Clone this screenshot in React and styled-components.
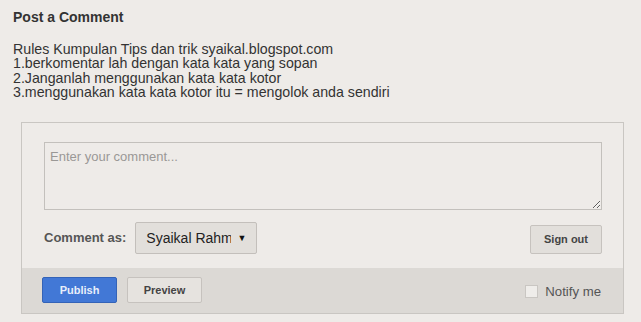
import React from "react";
import styled, { createGlobalStyle } from "styled-components";

const Global = createGlobalStyle`
  html, body { margin: 0; padding: 0; background: #eeebe8; }
  body { font-family: Arial, "Liberation Sans", sans-serif; }
`;

const Page = styled.div`
  width: 641px;
  height: 322px;
  box-sizing: border-box;
  padding: 9px 0 0 13px;
  background: #eeebe8;
  overflow: hidden;
`;

const Title = styled.h4`
  margin: 0;
  font: bold 14px/16px "Liberation Sans", Arial, sans-serif;
  color: #333;
`;

const Rules = styled.div`
  margin-top: 17px;
  font: 14.2px/14.4px "Liberation Sans", Arial, sans-serif;
  color: #333;
`;

const Box = styled.div`
  margin: 22px 0 0 8px;
  width: 603px;
  box-sizing: border-box;
  border: 1px solid #c9c6c2;
  background: #eeebe8;
`;

const Body = styled.div`
  padding: 19px 21px 14px 22px;
`;

const Area = styled.textarea`
  display: block;
  width: 100%;
  height: 68px;
  box-sizing: border-box;
  margin: 0;
  border: 1px solid #c3c0bc;
  background: #eeebe8;
  padding: 6px 5px;
  font: 13px "Liberation Sans", Arial, sans-serif;
  color: #333;
  resize: vertical;
  outline: none;
  &::placeholder { color: #9a9896; }
`;

const Row = styled.div`
  display: flex;
  align-items: center;
  margin-top: 12px;
`;

const Label = styled.span`
  font: bold 13px "Liberation Sans", Arial, sans-serif;
  color: #555;
  margin-right: 9px;
`;

const Select = styled.div`
  width: 122px;
  height: 32px;
  box-sizing: border-box;
  border: 1px solid #c3bfbb;
  border-radius: 2px;
  background: #e2dfdb;
  display: flex;
  align-items: center;
  padding: 0 10px 0 10px;
  font: 14px "Liberation Sans", Arial, sans-serif;
  color: #222;
`;

const SelectText = styled.span`
  flex: 1;
  overflow: hidden;
  white-space: nowrap;
`;

const Arrow = styled.span`
  font-size: 9px;
  margin-left: 6px;
  color: #111;
`;

const Spacer = styled.div`
  flex: 1;
`;

const GrayButton = styled.div`
  height: ${p => p.$h || 29}px;
  width: ${p => p.$w}px;
  box-sizing: border-box;
  border: 1px solid #c6c2be;
  border-radius: 2px;
  background: ${p => p.$bg || "#e2dfdb"};
  display: flex;
  align-items: center;
  justify-content: center;
  font: bold 11px "Liberation Sans", Arial, sans-serif;
  color: #444;
  margin-top: ${p => p.$mt || 0}px;
`;

const Footer = styled.div`
  background: #dcd9d5;
  height: 45px;
  display: flex;
  align-items: center;
  padding: 0 22px 0 20px;
`;

const Publish = styled.div`
  width: 75px;
  height: 26px;
  box-sizing: border-box;
  border: 1px solid #3463b7;
  border-radius: 2px;
  background: #4278d6;
  display: flex;
  align-items: center;
  justify-content: center;
  font: bold 11px "Liberation Sans", Arial, sans-serif;
  color: #e8eefa;
  margin-right: 10px;
`;

const Check = styled.span`
  width: 13px;
  height: 13px;
  box-sizing: border-box;
  border: 1px solid #c9c6c2;
  background: #efedea;
  margin-right: 7px;
  margin-top: 2px;
`;

const Notify = styled.span`
  font: 13.2px "Liberation Sans", Arial, sans-serif;
  color: #555;
  margin-top: 2px;
`;

export default function App() {
  return (
    <Page>
      <Global />
      <Title>Post a Comment</Title>
      <Rules>
        Rules Kumpulan Tips dan trik syaikal.blogspot.com<br />
        1.berkomentar lah dengan kata kata yang sopan<br />
        2.Janganlah menggunakan kata kata kotor<br />
        3.menggunakan kata kata kotor itu = mengolok anda sendiri
      </Rules>
      <Box>
        <Body>
          <Area placeholder="Enter your comment..." />
          <Row>
            <Label>Comment as:</Label>
            <Select>
              <SelectText>Syaikal Rahmat</SelectText>
              <Arrow>▼</Arrow>
            </Select>
            <Spacer />
            <GrayButton $w={72} $mt={3}>Sign out</GrayButton>
          </Row>
        </Body>
        <Footer>
          <Publish>Publish</Publish>
          <GrayButton $w={75} $h={26} $bg="#e6e3df">Preview</GrayButton>
          <Spacer />
          <Check />
          <Notify>Notify me</Notify>
        </Footer>
      </Box>
    </Page>
  );
}
